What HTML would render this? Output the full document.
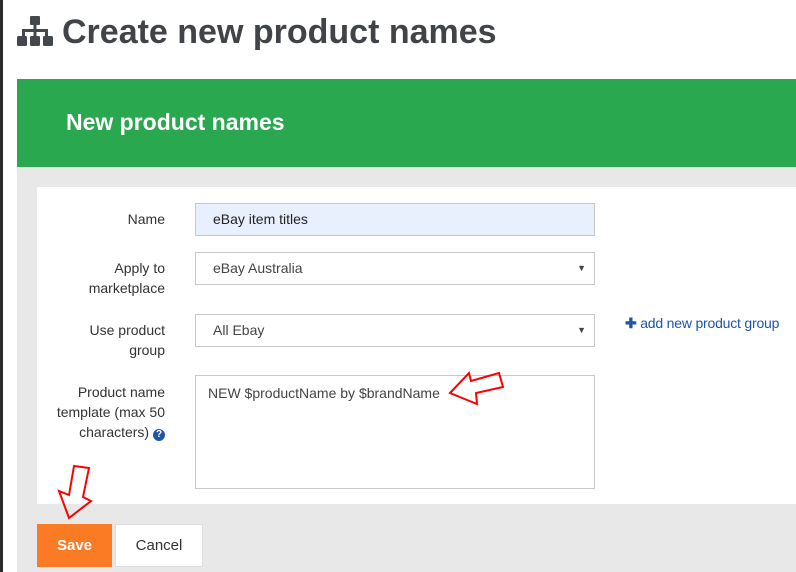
<!DOCTYPE html>
<html><head><style>
body{margin:0;width:796px;height:572px;background:#fff;position:relative;overflow:hidden;font-family:"Liberation Sans",sans-serif}
.abs{position:absolute}
.lbl{position:absolute;right:631px;text-align:right;font-size:14px;color:#333;line-height:20px}
.inp{position:absolute;left:195px;width:400px;border:1px solid #c8c8c8;background:#fff;font-size:14px;color:#444;box-sizing:border-box;padding-left:17px}
.arr{position:absolute;right:8px;font-size:9px;color:#444}
</style></head><body>
<div class="abs" style="left:0;top:0;width:3px;height:572px;background:#2b2b2b"></div>
<svg class="abs" style="left:17px;top:16px" width="36" height="31" viewBox="0 0 36 31">
<g fill="#44474b"><rect x="13" y="0" width="10" height="9" rx="1"/><rect x="16.5" y="8" width="3" height="7"/><rect x="5" y="13" width="26" height="3"/><rect x="5" y="13" width="3" height="8"/><rect x="28" y="13" width="3" height="8"/><rect x="16.5" y="13" width="3" height="8"/><rect x="0" y="20" width="10" height="10" rx="1.5"/><rect x="13" y="20" width="10" height="10" rx="1.5"/><rect x="26" y="20" width="10" height="10" rx="1.5"/></g></svg>
<div class="abs" style="left:62px;top:11px;font-size:34px;font-weight:bold;color:#404347;line-height:42px">Create new product names</div>
<div class="abs" style="left:17px;top:79px;width:779px;height:88px;background:#2aa84f"></div>
<div class="abs" style="left:66px;top:109px;font-size:23px;font-weight:bold;color:#fff">New product names</div>
<div class="abs" style="left:17px;top:167px;width:779px;height:405px;background:#e8e8e8"></div>
<div class="abs" style="left:37px;top:187px;width:759px;height:317px;background:#fff"></div>
<div class="lbl" style="top:209px">Name</div>
<div class="inp" style="top:203px;height:33px;line-height:31px;background:#e8f0fe;color:#222">eBay item titles</div>
<div class="lbl" style="top:258px">Apply to<br>marketplace</div>
<div class="inp" style="top:252px;height:33px;line-height:31px">eBay Australia<span class="arr">▼</span></div>
<div class="lbl" style="top:320px">Use product<br>group</div>
<div class="inp" style="top:314px;height:33px;line-height:31px">All Ebay<span class="arr">▼</span></div>
<div class="abs" style="left:625px;top:315px;font-size:14px;color:#1d56a8;letter-spacing:-0.2px"><b>✚</b> add new product group</div>
<div class="lbl" style="top:382px">Product name<br>template (max 50<br>characters) <span style="display:inline-block;width:12px;height:12px;border-radius:50%;background:#1d56a8;color:#fff;font-size:10px;line-height:12px;text-align:center;font-weight:bold">?</span></div>
<div class="inp" style="top:375px;height:114px;padding-left:12px;padding-top:8px;line-height:18px">NEW $productName by $brandName</div>
<svg class="abs" style="left:0;top:0" width="796" height="572"><g fill="none" stroke="#f00" stroke-width="2"><polygon points="450,393 469,373 471,381 499,373 503,387 476,393 477,404"/><polygon points="74,466 89,468 83,497 91,501 69,518 59,491 69,495"/></g></svg>
<div class="abs" style="left:37px;top:524px;width:75px;height:43px;background:#fb7a24;color:#fff;font-weight:bold;font-size:15px;line-height:43px;text-align:center">Save</div>
<div class="abs" style="left:115px;top:524px;width:88px;height:43px;background:#fff;border:1px solid #ddd;box-sizing:border-box;color:#333;font-size:15px;line-height:41px;text-align:center">Cancel</div>
</body></html>
